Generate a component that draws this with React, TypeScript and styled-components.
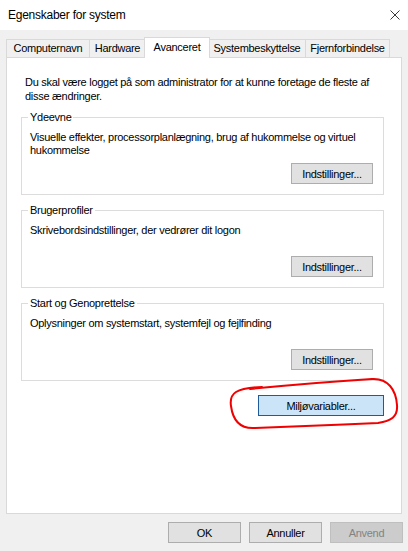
import styled, { createGlobalStyle } from "styled-components";

const GlobalStyle = createGlobalStyle`
  html, body {
    margin: 0;
    padding: 0;
    background: #f0f0f0;
  }
  * {
    box-sizing: border-box;
  }
`;

const Window = styled.div`
  position: relative;
  width: 408px;
  height: 551px;
  background: #f0f0f0;
  display: flex;
  flex-direction: column;
  font-family: "Liberation Sans", Arial, sans-serif;
  font-size: 11px;
  letter-spacing: -0.28px;
  color: #000;
  overflow: hidden;
`;

const TitleBar = styled.div`
  height: 30px;
  background: #fff;
  display: flex;
  align-items: center;
  justify-content: space-between;
  padding: 0 8px;
  flex-shrink: 0;
`;

const Title = styled.div`
  font-size: 12px;
  letter-spacing: -0.25px;
`;

const CloseIcon = styled.svg`
  width: 10px;
  height: 10px;
  display: block;
`;

const Body = styled.div`
  display: flex;
  flex-direction: column;
  padding: 7px 6px 0 6px;
`;

const TabStrip = styled.div`
  display: flex;
  align-items: flex-end;
  height: 20px;
`;

const Tab = styled.div<{ $width: number; $active?: boolean }>`
  width: ${({ $width }) => $width}px;
  height: ${({ $active }) => ($active ? 21 : 18)}px;
  margin: ${({ $active }) => ($active ? "0 -2px -1px -1px" : "0 -1px 0 0")};
  display: flex;
  align-items: center;
  justify-content: center;
  padding-bottom: ${({ $active }) => ($active ? 3 : 1)}px;
  border: 1px solid #d9d9d9;
  border-bottom: none;
  background: ${({ $active }) => ($active ? "#fff" : "#f0f0f0")};
  position: relative;
  z-index: ${({ $active }) => ($active ? 2 : 1)};
  white-space: nowrap;
`;

const Panel = styled.div`
  height: 457px;
  background: #fff;
  border: 1px solid #d9d9d9;
  padding: 17px 17px 0 14px;
  display: flex;
  flex-direction: column;
`;

const Intro = styled.p`
  margin: 0 0 7px 0;
  padding-left: 4px;
  line-height: 14px;
`;

const GroupList = styled.div`
  display: flex;
  flex-direction: column;
  gap: 8px;
`;

const Group = styled.fieldset`
  margin: 0;
  padding: 7px 10px 10px 8px;
  border: 1px solid #dcdcdc;
  min-inline-size: 0;
`;

const GroupTitle = styled.legend`
  padding: 0 2px;
  margin-left: -2px;
  line-height: 14px;
  height: 14px;
`;

const GroupBody = styled.div`
  height: 53px;
  display: flex;
  flex-direction: column;
  justify-content: space-between;
  line-height: 13px;
`;

const GroupText = styled.div``;

const Button = styled.button<{ $width: number; $focused?: boolean }>`
  width: ${({ $width }) => $width}px;
  height: 21px;
  padding: 0;
  font-family: inherit;
  font-size: 11px;
  letter-spacing: -0.28px;
  color: ${({ disabled }) => (disabled ? "#838383" : "#000")};
  background: ${({ $focused, disabled }) =>
    disabled ? "#cccccc" : $focused ? "#cce4f7" : "#e1e1e1"};
  border: 1px solid
    ${({ $focused, disabled }) =>
      disabled ? "#bfbfbf" : $focused ? "#1f5a9a" : "#adadad"};
  border-radius: 0;
  align-self: flex-end;
  flex-shrink: 0;
`;

const ActionRow = styled.div`
  display: flex;
  justify-content: flex-end;
  margin-top: 14px;
`;

const Footer = styled.div`
  display: flex;
  justify-content: flex-end;
  gap: 8px;
  padding-top: 8px;
  margin-right: -1px;
`;

const Annotation = styled.svg`
  position: absolute;
  left: 0;
  top: 0;
  width: 408px;
  height: 551px;
  pointer-events: none;
`;

const tabs = [
  { label: "Computernavn", width: 84 },
  { label: "Hardware", width: 57 },
  { label: "Avanceret", width: 66, active: true },
  { label: "Systembeskyttelse", width: 98 },
  { label: "Fjernforbindelse", width: 85 },
];

const groups = [
  {
    title: "Ydeevne",
    text: "Visuelle effekter, processorplanlægning, brug af hukommelse og virtuel hukommelse",
  },
  {
    title: "Brugerprofiler",
    text: "Skrivebordsindstillinger, der vedrører dit logon",
  },
  {
    title: "Start og Genoprettelse",
    text: "Oplysninger om systemstart, systemfejl og fejlfinding",
  },
];

export default function App() {
  return (
    <>
      <GlobalStyle />
      <Window>
        <TitleBar>
          <Title>Egenskaber for system</Title>
          <CloseIcon viewBox="0 0 10 10">
            <path d="M0.5 0.5 L9.5 9.5 M9.5 0.5 L0.5 9.5" stroke="#222" strokeWidth="0.9" />
          </CloseIcon>
        </TitleBar>
        <Body>
          <TabStrip>
            {tabs.map((tab) => (
              <Tab key={tab.label} $width={tab.width} $active={tab.active}>
                {tab.label}
              </Tab>
            ))}
          </TabStrip>
          <Panel>
            <Intro>
              Du skal være logget på som administrator for at kunne foretage de fleste af disse
              ændringer.
            </Intro>
            <GroupList>
              {groups.map((group) => (
                <Group key={group.title}>
                  <GroupTitle>{group.title}</GroupTitle>
                  <GroupBody>
                    <GroupText>{group.text}</GroupText>
                    <Button $width={82}>Indstillinger...</Button>
                  </GroupBody>
                </Group>
              ))}
            </GroupList>
            <ActionRow>
              <Button $width={126} $focused>
                Miljøvariabler...
              </Button>
            </ActionRow>
          </Panel>
          <Footer>
            <Button $width={73}>OK</Button>
            <Button $width={73}>Annuller</Button>
            <Button $width={73} disabled>
              Anvend
            </Button>
          </Footer>
        </Body>
        <Annotation viewBox="0 0 408 551">
          <path
            d="M250 389 C 290 385, 340 381, 372 379 C 388 378, 396 390, 397 405 C 398 417, 391 421, 378 423 C 335 425, 285 427, 255 428 C 241 429, 233 421, 231 406 C 229 393, 236 388, 262 387"
            fill="none"
            stroke="#f00000"
            strokeWidth="2"
            strokeLinecap="round"
          />
        </Annotation>
      </Window>
    </>
  );
}
